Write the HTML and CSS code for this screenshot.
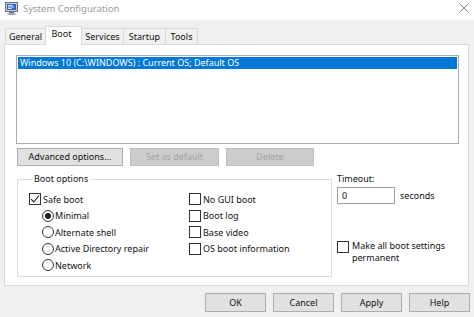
FILE: index.html
```html
<!DOCTYPE html>
<html>
<head>
<meta charset="utf-8">
<link rel="stylesheet" href="styles.css">
</head>
<body>
<div class="window">
  <div class="titlebar">
    <svg class="app-icon" width="13" height="13" viewBox="0 0 13 13">
      <rect x="0.5" y="0.5" width="12" height="9" fill="#c8ccd4" stroke="#6b7380"/>
      <rect x="2" y="2" width="9" height="6" fill="#2f64c8"/>
      <path d="M3 3.5h5M3 5h6M3 6.5h4" stroke="#ffffff" stroke-width="0.8"/>
      <rect x="4" y="10" width="5" height="1.5" fill="#6b7380"/>
      <rect x="2.5" y="11.5" width="8" height="1.5" fill="#9aa0aa"/>
    </svg>
    <span class="title">System Configuration</span>
    <svg class="close" width="10" height="10" viewBox="0 0 10 10">
      <path d="M0.5 0.5L9.5 9.5M9.5 0.5L0.5 9.5" stroke="#8c8c8c" stroke-width="1"/>
    </svg>
  </div>

  <div class="tabs">
    <div class="tab tab-general">General</div>
    <div class="tab tab-boot active">Boot</div>
    <div class="tab tab-services">Services</div>
    <div class="tab tab-startup">Startup</div>
    <div class="tab tab-tools">Tools</div>
  </div>

  <div class="page">
    <div class="listbox">
      <div class="list-row selected">Windows 10 (C:\WINDOWS) : Current OS; Default OS</div>
    </div>

    <div class="button-row">
      <div class="btn btn-adv">Advanced options...</div>
      <div class="btn btn-set disabled">Set as default</div>
      <div class="btn btn-del disabled">Delete</div>
    </div>

    <div class="lower">
      <fieldset class="group">
        <legend>Boot options</legend>
        <div class="group-cols">
          <div class="col-left">
            <div class="opt"><span class="check checked"><svg width="10" height="10" viewBox="0 0 10 10"><path d="M1 5.2L3.8 8L9 1.5" fill="none" stroke="#222" stroke-width="1.1"/></svg></span>Safe boot</div>
            <div class="opt sub"><span class="radio on"></span>Minimal</div>
            <div class="opt sub"><span class="radio"></span>Alternate shell</div>
            <div class="opt sub"><span class="radio"></span>Active Directory repair</div>
            <div class="opt sub"><span class="radio"></span>Network</div>
          </div>
          <div class="col-right">
            <div class="opt"><span class="check"></span>No GUI boot</div>
            <div class="opt"><span class="check"></span>Boot log</div>
            <div class="opt"><span class="check"></span>Base video</div>
            <div class="opt"><span class="check"></span>OS boot information</div>
          </div>
        </div>
      </fieldset>

      <div class="side">
        <div class="timeout-label">Timeout:</div>
        <div class="timeout-row">
          <div class="textbox">0</div>
          <span class="seconds">seconds</span>
        </div>
        <div class="permanent">
          <span class="check"></span>
          <span class="perm-text">Make all boot settings<br>permanent</span>
        </div>
      </div>
    </div>
  </div>

  <div class="footer">
    <div class="btn btn-foot">OK</div>
    <div class="btn btn-foot">Cancel</div>
    <div class="btn btn-foot">Apply</div>
    <div class="btn btn-foot">Help</div>
  </div>
</div>
</body>
</html>
```

FILE: styles.css
```css
* { box-sizing: border-box; }
html, body { margin: 0; padding: 0; }
body {
  font-family: "Noto Sans", "Open Sans", sans-serif;
  font-size: 9px;
  color: #111;
  background: #f0f0f0;
}
.window {
  width: 474px;
  height: 317px;
  background: #f0f0f0;
  overflow: hidden;
}
.titlebar {
  height: 20px;
  background: #ffffff;
  display: flex;
  align-items: center;
  padding-left: 5px;
  padding-right: 5px;
}
.app-icon { display: block; margin-top: -3px; }
.title {
  margin-left: 5px;
  color: #9a9a9a;
  font-size: 9.5px;
  margin-top: -4px;
}
.close { margin-left: auto; margin-top: -4px; margin-right: 0; }

.tabs {
  display: flex;
  align-items: flex-end;
  padding-left: 5px;
  margin-top: 6px;
  height: 18px;
  position: relative;
  z-index: 1;
}
.tab {
  height: 16px;
  line-height: 15px;
  text-align: center;
  border: 1px solid #d9d9d9;
  border-bottom: none;
  margin-right: -1px;
  background: #f0f0f0;
}
.tab-general { width: 41px; }
.tab-boot { width: 37px; }
.tab-services { width: 43px; }
.tab-startup { width: 43px; }
.tab-tools { width: 33px; }
.tab.active {
  background: #ffffff;
  margin-bottom: -1px;
  height: 19px;
  line-height: 14px;
  padding-right: 4px;
  position: relative;
  z-index: 2;
}
.page {
  margin: 0 5px 0 4px;
  height: 242px;
  background: #ffffff;
  border: 1px solid #d9d9d9;
  padding: 10px 9px 0 11px;
}
.listbox {
  height: 89px;
  border: 1px solid #acacac;
  padding: 1px;
}
.list-row {
  height: 12px;
  line-height: 12px;
  padding-left: 2px;
  white-space: nowrap;
}
.list-row.selected {
  background: #0078d7;
  color: #ffffff;
}
.button-row {
  display: flex;
  margin-top: 4px;
  padding-left: 1px;
  gap: 7px;
}
.btn {
  height: 18px;
  line-height: 16px;
  text-align: center;
  background: #e1e1e1;
  border: 1px solid #adadad;
  color: #111;
}
.btn.disabled {
  background: #cccccc;
  border-color: #bfbfbf;
  color: #a3a3a3;
}
.btn-adv { width: 106px; }
.btn-set { width: 89px; }
.btn-del { width: 88px; }

.lower {
  display: flex;
  margin-top: 6px;
  padding-left: 1px;
}
.group {
  width: 315px;
  height: 105px;
  margin: 0;
  padding: 0 0 0 11px;
  border: 1px solid #dcdcdc;
}
.group legend {
  padding: 0 2px;
  margin-left: 3px;
  line-height: 14px;
}
.group-cols {
  display: flex;
}
.col-left { width: 160px; padding-top: 5px; }
.col-right { padding-top: 5px; }
.opt {
  display: flex;
  align-items: center;
  height: 16.5px;
  white-space: nowrap;
}
.opt.sub { padding-left: 13px; }
.check {
  width: 12px;
  height: 12px;
  border: 1px solid #333333;
  background: #ffffff;
  margin-right: 2px;
  display: flex;
  align-items: center;
  justify-content: center;
  flex: none;
}
.radio {
  width: 12px;
  height: 12px;
  border: 1px solid #333333;
  border-radius: 50%;
  background: #ffffff;
  margin-right: 1px;
  flex: none;
  display: flex;
  align-items: center;
  justify-content: center;
}
.radio.on::after {
  content: "";
  width: 6px;
  height: 6px;
  border-radius: 50%;
  background: #222;
}
.side {
  margin-left: 5px;
  padding-top: 0;
}
.timeout-label { line-height: 14px; height: 14px; }
.timeout-row {
  display: flex;
  align-items: center;
  margin-top: 1px;
}
.textbox {
  width: 58px;
  height: 17px;
  border: 1px solid #a0a0a0;
  background: #fff;
  line-height: 15px;
  padding-left: 4px;
}
.seconds { margin-left: 5px; }
.permanent {
  display: flex;
  align-items: flex-start;
  margin-top: 37px;
}
.perm-text { line-height: 12px; white-space: nowrap; margin-left: 1px; margin-top: -1px; }

.footer {
  display: flex;
  justify-content: flex-end;
  gap: 7px;
  padding: 7px 4px 0 0;
}
.btn-foot { width: 61px; height: 19px; line-height: 17px; }
```
